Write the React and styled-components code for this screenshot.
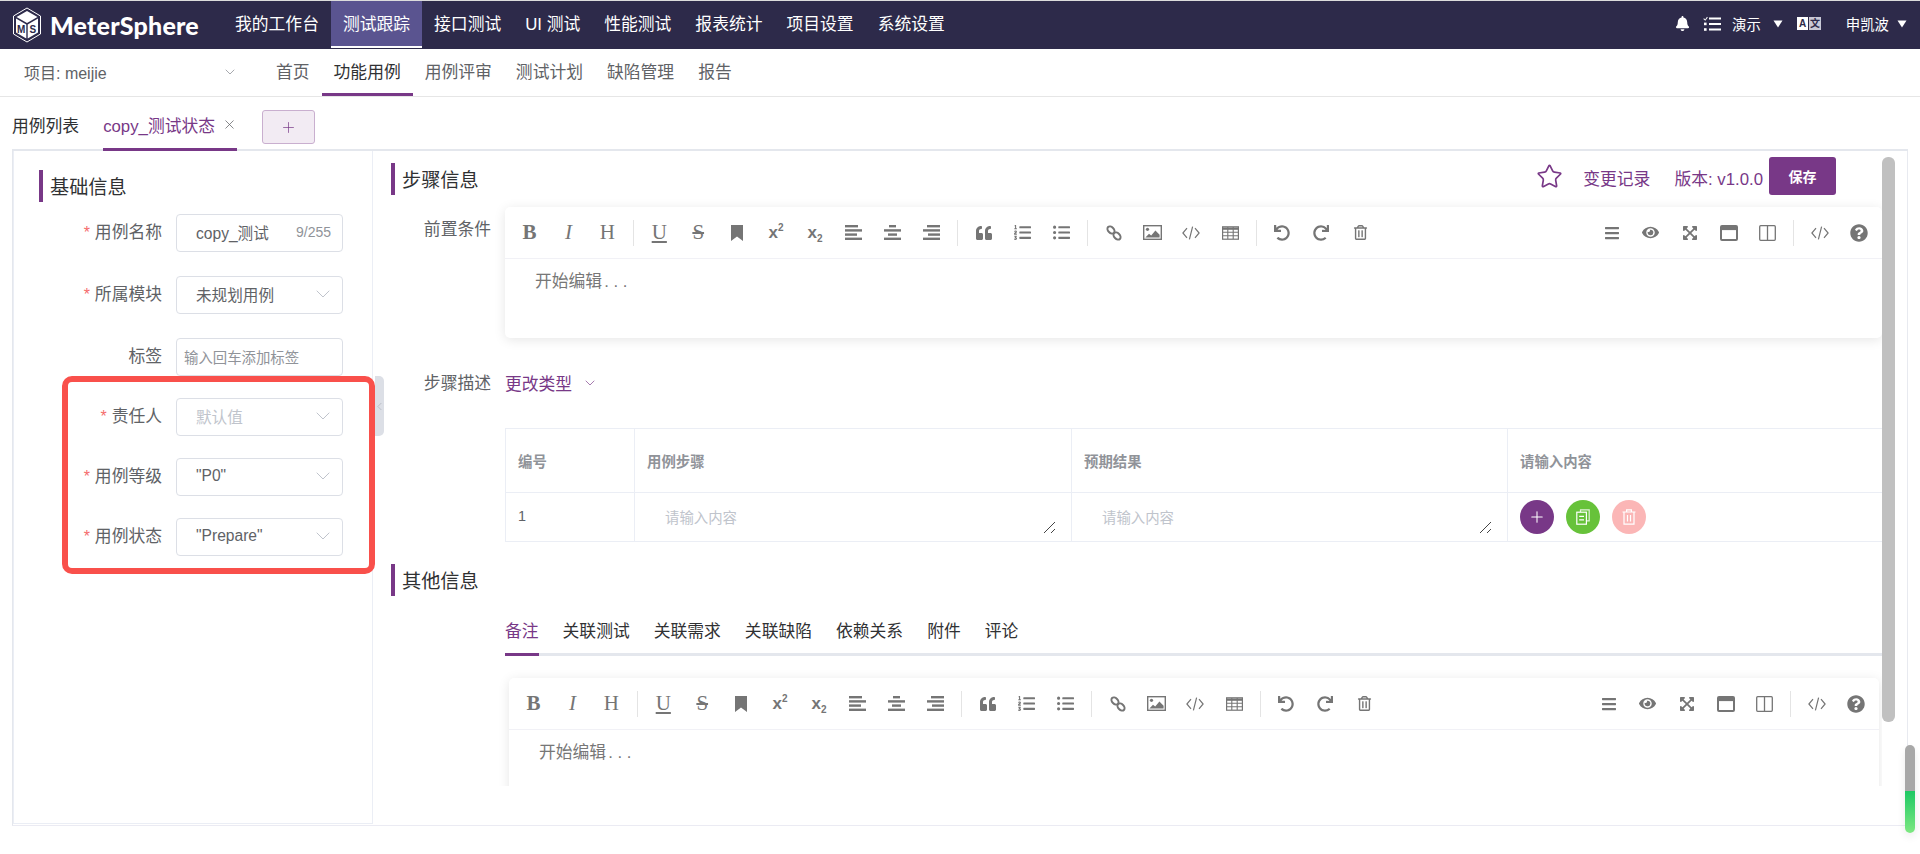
import React from "react";
import styled, { createGlobalStyle } from "styled-components";
import { ChevronDown, ChevronLeft, Plus, Star, X } from "lucide-react";
import {
  FaBars,
  FaBell,
  FaExpandArrowsAlt,
  FaEye,
  FaListOl,
  FaListUl,
  FaQuestionCircle,
  FaQuoteLeft,
  FaRedo,
  FaRegTrashAlt,
  FaUndo,
} from "react-icons/fa";

const PURPLE = "#783887";
const LINE = "#ebeef5";

const GlobalStyle = createGlobalStyle`
  html, body {
    margin: 0;
    padding: 0;
    background: #fff;
    font-family: "Liberation Sans", "Noto Sans CJK SC", sans-serif;
  }
  * {
    box-sizing: border-box;
  }
`;

const Page = styled.div`
  position: relative;
  width: 1920px;
  height: 854px;
  overflow: hidden;
  border-top: 1px solid #dcdcdc;
  background: #fff;
`;

/* top bar */
const TopBar = styled.header`
  display: flex;
  align-items: stretch;
  height: 48px;
  background: #2d2a4a;
  color: #fff;
`;

const Logo = styled.div`
  display: flex;
  align-items: center;
  gap: 8px;
  width: 223px;
  padding-left: 12px;
`;

const LogoText = styled.span`
  font-family: "Lato", sans-serif;
  font-weight: 900;
  font-size: 25px;
  letter-spacing: 0.2px;
  color: #fff;
`;

const NavItem = styled.div`
  display: flex;
  align-items: center;
  height: 47px;
  padding: 0 12px 2px;
  font-size: 16.8px;
  background: ${({ $active }) => ($active ? "#5a5490" : "transparent")};
  border-bottom: 2px solid ${({ $active }) => ($active ? "#fff" : "transparent")};
`;

const TopRight = styled.div`
  display: flex;
  align-items: center;
  margin-left: auto;
  width: 245px;
  padding-bottom: 3px;
`;

const TopItem = styled.span`
  display: inline-flex;
  align-items: center;
  margin-left: ${({ $ml }) => $ml || 0}px;
  font-size: 14.4px;
`;

const LangBox = styled.span`
  display: flex;
  gap: 1px;
  width: 24px;
`;

const LangCell = styled.span`
  flex: 1;
  height: 13px;
  line-height: 13px;
  text-align: center;
  font-size: 10px;
  font-weight: 700;
  background: ${({ $dark }) => ($dark ? "#c9c8d6" : "#fff")};
  color: #2d2a4a;
`;

/* second row */
const SubBar = styled.div`
  display: flex;
  height: 48px;
  border-bottom: 1px solid #e6e6e6;
`;

const ProjectSelect = styled.div`
  display: flex;
  align-items: center;
  justify-content: space-between;
  width: 240px;
  margin-left: 24px;
  padding-right: 26px;
  padding-bottom: 1px;
  font-size: 16px;
  color: #606266;
`;

const SubTab = styled.div`
  display: flex;
  align-items: center;
  height: 47px;
  padding: 0 12px;
  font-size: 16.8px;
  color: ${({ $active }) => ($active ? "#303133" : "#606266")};
  border-bottom: 3px solid ${({ $active }) => ($active ? PURPLE : "transparent")};
`;

/* page tabs */
const PageTabs = styled.div`
  display: flex;
  align-items: flex-start;
  height: 54px;
  margin: 0 12px;
  border-bottom: 2px solid #e4e7ed;
`;

const PageTab = styled.div`
  display: flex;
  align-items: center;
  gap: 7px;
  height: 54px;
  margin-right: ${({ $mr }) => $mr || 0}px;
  padding-top: 4px;
  font-size: 16.8px;
  color: ${({ $active }) => ($active ? PURPLE : "#303133")};
  border-bottom: 3px solid ${({ $active }) => ($active ? PURPLE : "transparent")};
`;

const AddTab = styled.div`
  display: flex;
  align-items: center;
  justify-content: center;
  width: 53px;
  height: 34px;
  margin: 13px 0 0 25px;
  border: 1px solid #c9afcf;
  border-radius: 3px;
  background: #f2ebf3;
  color: ${PURPLE};
`;

/* main */
const Shell = styled.div`
  display: flex;
  height: 675px;
  margin: 0 12px;
  border-left: 1px solid #e4e7ed;
  border-right: 1px solid #e8eaf0;
  border-bottom: 1px solid #ebebf3;
`;

const Aside = styled.aside`
  position: relative;
  flex: none;
  width: 360px;
  height: 673px;
  padding: 19px 0 0 25px;
  border-left: 1px solid ${LINE};
  border-right: 1px solid ${LINE};
  border-bottom: 1px solid ${LINE};
`;

const CollapseHandle = styled.div`
  position: absolute;
  left: calc(100% + 3px);
  top: 225px;
  display: flex;
  align-items: center;
  width: 9px;
  height: 60px;
  border-radius: 0 5px 5px 0;
  background: #dcdfe6;
  color: #a9adb6;
  svg {
    flex: none;
    margin-left: -2px;
  }
`;

const SectionTitle = styled.h3`
  display: flex;
  align-items: center;
  height: 32px;
  margin: 0;
  padding-left: 7px;
  border-left: 4px solid ${PURPLE};
  font-size: 19.2px;
  font-weight: 400;
  color: #303133;
`;

const FormGroup = styled.div`
  display: flex;
  flex-direction: column;
  gap: ${({ $gap }) => $gap}px;
  margin-top: ${({ $top }) => $top}px;
  margin-left: -25px;
`;

const FormRow = styled.div`
  display: flex;
  align-items: center;
  gap: 14px;
  height: 38px;
`;

const FormLabel = styled.label`
  flex: none;
  width: 148px;
  padding-bottom: 5px;
  text-align: right;
  font-size: 16.8px;
  color: #606266;
`;

const Required = styled.span`
  margin-right: 5px;
  color: #f56c6c;
  font-size: 16px;
`;

const Field = styled.div`
  display: flex;
  align-items: center;
  justify-content: space-between;
  width: 167px;
  height: 38px;
  padding: 0 ${({ $right }) => $right || 11}px 2px ${({ $pad }) => $pad || 19}px;
  border: 1px solid #dcdfe6;
  border-radius: 4px;
  font-size: ${({ $small }) => ($small ? "14.4px" : "15.6px")};
  color: ${({ $muted, $soft }) => ($muted ? "#c0c4cc" : $soft ? "#909399" : "#606266")};
`;

const Counter = styled.span`
  font-size: 14px;
  color: #909399;
`;

const Content = styled.main`
  flex: 1;
  min-width: 0;
  height: 635px;
  overflow: hidden;
  padding: 6px 0 0 18px;
`;

const Gutter = styled.div`
  flex: none;
  width: 25px;
  padding-top: 6px;
`;

const ScrollThumb = styled.div`
  width: 13px;
  height: 565px;
  border-radius: 6px;
  background: #c0c0c0;
`;

const HeadRow = styled.div`
  display: flex;
  align-items: flex-end;
  justify-content: space-between;
  height: 38px;
`;

const HeadActions = styled.div`
  display: flex;
  align-items: center;
  height: 38px;
  padding-right: 46px;
  color: ${PURPLE};
  font-size: 16.8px;
`;

const RecordLink = styled.span`
  margin-left: 20px;
  padding-top: 3px;
`;

const VersionText = styled.span`
  margin-left: 24px;
  padding-top: 3px;
`;

const SaveButton = styled.button`
  width: 67px;
  height: 38px;
  margin-left: 6px;
  padding-bottom: 2px;
  border: 0;
  border-radius: 3px;
  background: ${PURPLE};
  color: #fff;
  font: 700 14px "Liberation Sans", "Noto Sans CJK SC", sans-serif;
`;

const FieldRow = styled.div`
  display: grid;
  grid-template-columns: 100px 1fr;
  column-gap: 14px;
  margin-top: ${({ $top }) => $top}px;
`;

const RowLabel = styled.div`
  text-align: right;
  font-size: 16.8px;
  line-height: 24px;
  color: #606266;
  padding-top: ${({ $top }) => $top || 0}px;
`;

/* markdown editor */
const EditorBox = styled.div`
  height: ${({ $h }) => $h}px;
  margin: ${({ $inset }) => ($inset ? "22px 3px 0 118px" : "0")};
  border-radius: 5px;
  background: #fff;
  box-shadow: 0 2px 12px 0 rgba(0, 0, 0, 0.1);
`;

const Toolbar = styled.div`
  display: flex;
  justify-content: space-between;
  height: 52px;
  padding: 0 4px 0 5px;
  border-bottom: 1px solid #f1f1f6;
`;

const ToolGroup = styled.div`
  display: flex;
  align-items: center;
`;

const Tool = styled.span`
  display: flex;
  align-items: center;
  justify-content: center;
  flex: none;
  width: 38.95px;
  height: 51px;
  color: #757575;
  font-family: "Liberation Serif", serif;
  font-size: 21px;
  font-weight: ${({ $bold }) => ($bold ? 700 : 400)};
  font-style: ${({ $italic }) => ($italic ? "italic" : "normal")};
  text-decoration: ${({ $line }) => $line || "none"};
`;

const ScriptTool = styled(Tool)`
  font-family: "Liberation Sans", sans-serif;
  font-size: 17px;
  font-weight: 700;
  sup, sub {
    font-size: 10px;
    line-height: 0;
  }
`;

const ToolSep = styled.span`
  flex: none;
  width: 1px;
  height: 26px;
  margin: 0 6px;
  background: #e4e4e4;
`;

const EditorBody = styled.div`
  padding: 11px 0 0 30px;
  font-size: 16.8px;
  line-height: 24px;
  color: #777;
`;

const Dots = styled.span`
  margin-left: 2px;
  letter-spacing: 4.6px;
`;

const StepValue = styled.div`
  display: flex;
  align-items: center;
  gap: 10px;
  height: 24px;
  padding-bottom: 2px;
  color: ${PURPLE};
  font-size: 16.8px;
`;

/* steps table */
const StepTable = styled.table`
  width: 1377px;
  margin: 32px 0 0 114px;
  table-layout: fixed;
  border-collapse: collapse;
  border: 1px solid ${LINE};
  th, td {
    border: 1px solid ${LINE};
    padding: 0 0 0 12px;
    text-align: left;
  }
  th {
    height: 64px;
    font-size: 14.4px;
    font-weight: 700;
    color: #909399;
  }
  td {
    height: 49px;
    font-size: 14.4px;
    color: #606266;
  }
`;

const NumberCell = styled.td`
  && {
    padding-bottom: 2px;
  }
`;

const TextCell = styled.td`
  position: relative;
  && {
    padding-left: 30px;
    padding-bottom: 2px;
    color: #c0c4cc;
  }
`;

const ResizeMark = styled.svg`
  position: absolute;
  right: 15px;
  bottom: 7px;
`;

const RowButtons = styled.div`
  display: flex;
  gap: 12px;
`;

const RoundButton = styled.span`
  display: flex;
  align-items: center;
  justify-content: center;
  width: 34px;
  height: 34px;
  border-radius: 50%;
  background: ${({ $bg }) => $bg};
  color: #fff;
`;

const OtherTitle = styled(SectionTitle)`
  margin-top: 22px;
`;

const InfoTabs = styled.div`
  display: flex;
  height: 60px;
  margin-left: 114px;
  border-bottom: 3px solid #e4e7ed;
`;

const InfoTab = styled.div`
  display: flex;
  align-items: center;
  height: 60px;
  margin-right: 24px;
  padding-top: 11px;
  font-size: 16.8px;
  color: ${({ $active }) => ($active ? PURPLE : "#303133")};
  border-bottom: 3px solid ${({ $active }) => ($active ? PURPLE : "transparent")};
`;

/* things lying over the page */
const Annotation = styled.div`
  position: absolute;
  left: 62px;
  top: 375px;
  width: 313px;
  height: 198px;
  border: 6px solid #f9504b;
  border-radius: 10px;
  pointer-events: none;
`;

const FloatWidget = styled.div`
  position: absolute;
  left: 1905px;
  top: 744px;
  width: 10px;
  height: 88px;
  border-radius: 5px;
  background: linear-gradient(#a8a8a8 0, #a8a8a8 52%, #1ec864 52%, #7ee882 100%);
  box-shadow: 0 4px 8px rgba(0, 0, 0, 0.08);
`;

const BookmarkIcon = () => (
  <svg width="14" height="16" viewBox="0 0 14 16" fill="currentColor">
    <path d="M1 0h12v16l-6-4.4L1 16z" />
  </svg>
);

const AlignIcon = ({ bars }) => (
  <svg width="17" height="15" viewBox="0 0 17 15" fill="currentColor">
    {bars.map(([x, w], i) => (
      <rect key={i} x={x} y={i * 4.2} width={w} height="2.4" />
    ))}
  </svg>
);

const LinkIcon = () => (
  <svg width="16" height="16" viewBox="0 0 18 18" fill="none" stroke="currentColor" strokeWidth="2.3">
    <ellipse cx="5.6" cy="5.6" rx="4.6" ry="3.2" transform="rotate(45 5.6 5.6)" />
    <ellipse cx="12.4" cy="12.4" rx="4.6" ry="3.2" transform="rotate(45 12.4 12.4)" />
  </svg>
);

const ImageIcon = () => (
  <svg width="19" height="15" viewBox="0 0 19 15">
    <rect x="0.7" y="0.7" width="17.6" height="13.6" fill="none" stroke="currentColor" strokeWidth="1.4" />
    <circle cx="4.5" cy="4.3" r="1.6" fill="currentColor" />
    <path d="M2.4 12.6l3.6-3.8 2.2 1.8 4.2-5.2 4.2 4.4v2.8z" fill="currentColor" />
  </svg>
);

const CodeIcon = () => (
  <svg width="18" height="14" viewBox="0 0 18 14" fill="none" stroke="currentColor" strokeWidth="1.2">
    <path d="M5 2.2L0.9 7 5 11.8M13 2.2L17.1 7 13 11.8M10.6 0.6L7.4 13.4" />
  </svg>
);

const TableIcon = () => (
  <svg width="17" height="14" viewBox="0 0 17 14" fill="none" stroke="currentColor">
    <rect x="0.6" y="0.8" width="15.8" height="12.4" strokeWidth="1.2" />
    <path d="M0.6 2.6h15.8" strokeWidth="2.4" />
    <path d="M0.6 6.2h15.8M0.6 9.7h15.8M5.8 1v12M11.2 1v12" strokeWidth="1.1" />
  </svg>
);

const WindowIcon = () => (
  <svg width="18" height="16" viewBox="0 0 18 16" fill="none" stroke="currentColor">
    <rect x="1" y="1" width="16" height="14" rx="1" strokeWidth="2" />
    <path d="M1 3.4h16" strokeWidth="3.4" />
  </svg>
);

const SplitIcon = () => (
  <svg width="17" height="16" viewBox="0 0 17 16" fill="none" stroke="currentColor" strokeWidth="1.3">
    <rect x="0.7" y="0.7" width="15.6" height="14.6" rx="1" />
    <path d="M8.5 1v14" />
  </svg>
);

const Toolkit = () => (
  <Toolbar>
    <ToolGroup>
      <Tool $bold>B</Tool>
      <Tool $italic>I</Tool>
      <Tool>H</Tool>
      <ToolSep />
      <Tool $line="underline">U</Tool>
      <Tool $line="line-through">S</Tool>
      <Tool>
        <BookmarkIcon />
      </Tool>
      <ScriptTool>
        <span>
          x<sup>2</sup>
        </span>
      </ScriptTool>
      <ScriptTool>
        <span>
          x<sub>2</sub>
        </span>
      </ScriptTool>
      <Tool>
        <AlignIcon bars={[[0, 13], [0, 17], [0, 12], [0, 17]]} />
      </Tool>
      <Tool>
        <AlignIcon bars={[[5, 7], [0, 17], [4, 9], [0, 17]]} />
      </Tool>
      <Tool>
        <AlignIcon bars={[[4, 13], [0, 17], [5, 12], [0, 17]]} />
      </Tool>
      <ToolSep />
      <Tool>
        <FaQuoteLeft size={16} />
      </Tool>
      <Tool>
        <FaListOl size={17} />
      </Tool>
      <Tool>
        <FaListUl size={17} />
      </Tool>
      <ToolSep />
      <Tool>
        <LinkIcon />
      </Tool>
      <Tool>
        <ImageIcon />
      </Tool>
      <Tool>
        <CodeIcon />
      </Tool>
      <Tool>
        <TableIcon />
      </Tool>
      <ToolSep />
      <Tool>
        <FaUndo size={16} />
      </Tool>
      <Tool>
        <FaRedo size={16} />
      </Tool>
      <Tool>
        <FaRegTrashAlt size={15} />
      </Tool>
    </ToolGroup>
    <ToolGroup>
      <Tool>
        <FaBars size={16} />
      </Tool>
      <Tool>
        <FaEye size={17} />
      </Tool>
      <Tool>
        <FaExpandArrowsAlt size={16} />
      </Tool>
      <Tool>
        <WindowIcon />
      </Tool>
      <Tool>
        <SplitIcon />
      </Tool>
      <ToolSep />
      <Tool>
        <CodeIcon />
      </Tool>
      <Tool>
        <FaQuestionCircle size={18} />
      </Tool>
    </ToolGroup>
  </Toolbar>
);

const Editor = ({ h, inset }) => (
  <EditorBox $h={h} $inset={inset}>
    <Toolkit />
    <EditorBody>
      开始编辑<Dots>...</Dots>
    </EditorBody>
  </EditorBox>
);

const LogoMark = () => (
  <svg width="30" height="36" viewBox="0 0 30 36">
    <path d="M15 1l13.5 8v18L15 35 1.5 27V9z" fill="none" stroke="#fff" strokeWidth="1" />
    <path d="M15 4l10.5 6L15 16 4.5 10z" fill="#fff" />
    <path d="M4 11.5l10.3 6v14L4 25.5z" fill="#fff" />
    <path d="M26 11.5l-10.3 6v14L26 25.5z" fill="#fff" />
    <text x="5" y="26" fontSize="10" fontWeight="700" fill="#2d2a4a" fontFamily="Liberation Sans">M</text>
    <text x="17.5" y="26" fontSize="10" fontWeight="700" fill="#2d2a4a" fontFamily="Liberation Sans">S</text>
  </svg>
);

const ChecklistIcon = () => (
  <svg width="18" height="16" viewBox="0 0 18 16" fill="#fff">
    <path d="M6 1.5h12v2H6zM6 7h12v2H6zM6 12.5h12v2H6zM1 2.2l1.2 1.2L4 .8l.8.6-2.5 3.4L.3 3z" />
    <rect x="1" y="6.6" width="2.6" height="2.6" />
    <rect x="1" y="12.2" width="2.6" height="2.6" />
  </svg>
);

const Caret = () => (
  <svg width="10" height="8" viewBox="0 0 10 8" fill="#fff">
    <path d="M0.5 0.5h9L5 7.5z" />
  </svg>
);

const CopyIcon = () => (
  <svg width="14" height="16" viewBox="0 0 14 16" fill="none" stroke="#fff" strokeWidth="1.2">
    <path d="M4.5 3V.8h8.7v11H10.8" opacity="0.8" />
    <rect x="0.8" y="3.2" width="9.6" height="12" />
    <path d="M3.2 7.4h4.8M3.2 10.8h4.8" />
  </svg>
);

const DeleteIcon = () => (
  <svg width="14" height="16" viewBox="0 0 14 16" fill="none" stroke="#fff" strokeWidth="1.2">
    <path d="M0.5 3h13M4.6 3V.8h4.8V3M2 3v12.2h10V3M5.5 6v6.4M8.5 6v6.4" />
  </svg>
);

const navItems = ["我的工作台", "测试跟踪", "接口测试", "UI 测试", "性能测试", "报表统计", "项目设置", "系统设置"];
const subTabs = ["首页", "功能用例", "用例评审", "测试计划", "缺陷管理", "报告"];
const infoTabs = ["备注", "关联测试", "关联需求", "关联缺陷", "依赖关系", "附件", "评论"];

const SelectField = ({ children, muted }) => (
  <Field $muted={muted} $right={7}>
    <span>{children}</span>
    <ChevronDown size={24} color="#c0c4cc" strokeWidth={1} />
  </Field>
);

export default function App() {
  return (
    <Page>
      <GlobalStyle />
      <TopBar>
        <Logo>
          <LogoMark />
          <LogoText>MeterSphere</LogoText>
        </Logo>
        {navItems.map((item) => (
          <NavItem key={item} $active={item === "测试跟踪"}>
            {item}
          </NavItem>
        ))}
        <TopRight>
          <TopItem>
            <FaBell size={15} />
          </TopItem>
          <TopItem $ml={13}>
            <ChecklistIcon />
          </TopItem>
          <TopItem $ml={11}>演示</TopItem>
          <TopItem $ml={12}>
            <Caret />
          </TopItem>
          <TopItem $ml={14}>
            <LangBox>
              <LangCell>A</LangCell>
              <LangCell $dark>文</LangCell>
            </LangBox>
          </TopItem>
          <TopItem $ml={25}>申凯波</TopItem>
          <TopItem $ml={8}>
            <Caret />
          </TopItem>
        </TopRight>
      </TopBar>

      <SubBar>
        <ProjectSelect>
          项目: meijie
          <ChevronDown size={16} color="#909399" strokeWidth={1.2} />
        </ProjectSelect>
        {subTabs.map((tab) => (
          <SubTab key={tab} $active={tab === "功能用例"}>
            {tab}
          </SubTab>
        ))}
      </SubBar>

      <PageTabs>
        <PageTab $mr={24}>用例列表</PageTab>
        <PageTab $active>
          copy_测试状态
          <X size={15} color="#606266" strokeWidth={1.2} />
        </PageTab>
        <AddTab>
          <Plus size={17} strokeWidth={1} />
        </AddTab>
      </PageTabs>

      <Shell>
        <Aside>
          <SectionTitle>基础信息</SectionTitle>
          <FormGroup $gap={24} $top={12}>
            <FormRow>
              <FormLabel>
                <Required>*</Required>用例名称
              </FormLabel>
              <Field>
                copy_测试
                <Counter>9/255</Counter>
              </Field>
            </FormRow>
            <FormRow>
              <FormLabel>
                <Required>*</Required>所属模块
              </FormLabel>
              <SelectField>未规划用例</SelectField>
            </FormRow>
            <FormRow>
              <FormLabel>标签</FormLabel>
              <Field $pad={7} $small $soft>
                输入回车添加标签
              </Field>
            </FormRow>
          </FormGroup>
          <FormGroup $gap={22} $top={22}>
            <FormRow>
              <FormLabel>
                <Required>*</Required>责任人
              </FormLabel>
              <SelectField muted>默认值</SelectField>
            </FormRow>
            <FormRow>
              <FormLabel>
                <Required>*</Required>用例等级
              </FormLabel>
              <SelectField>"P0"</SelectField>
            </FormRow>
            <FormRow>
              <FormLabel>
                <Required>*</Required>用例状态
              </FormLabel>
              <SelectField>"Prepare"</SelectField>
            </FormRow>
          </FormGroup>
          <CollapseHandle>
            <ChevronLeft size={13} strokeWidth={1.2} />
          </CollapseHandle>
        </Aside>

        <Content>
          <HeadRow>
            <SectionTitle>步骤信息</SectionTitle>
            <HeadActions>
              <Star size={27} strokeWidth={1.5} />
              <RecordLink>变更记录</RecordLink>
              <VersionText>版本: v1.0.0</VersionText>
              <SaveButton>保存</SaveButton>
            </HeadActions>
          </HeadRow>

          <FieldRow $top={12}>
            <RowLabel $top={11}>前置条件</RowLabel>
            <Editor h={131} />
          </FieldRow>

          <FieldRow $top={34}>
            <RowLabel>步骤描述</RowLabel>
            <StepValue>
              更改类型
              <ChevronDown size={16} strokeWidth={1} />
            </StepValue>
          </FieldRow>

          <StepTable>
            <colgroup>
              <col width="129" />
              <col width="437" />
              <col width="436" />
              <col width="375" />
            </colgroup>
            <thead>
              <tr>
                <th>编号</th>
                <th>用例步骤</th>
                <th>预期结果</th>
                <th>请输入内容</th>
              </tr>
            </thead>
            <tbody>
              <tr>
                <NumberCell>1</NumberCell>
                <TextCell>
                  请输入内容
                  <ResizeMark width="13" height="13" viewBox="0 0 13 13" stroke="#444" strokeWidth="1">
                    <path d="M1 12L12 1M8 12l4-4" />
                  </ResizeMark>
                </TextCell>
                <TextCell>
                  请输入内容
                  <ResizeMark width="13" height="13" viewBox="0 0 13 13" stroke="#444" strokeWidth="1">
                    <path d="M1 12L12 1M8 12l4-4" />
                  </ResizeMark>
                </TextCell>
                <td>
                  <RowButtons>
                    <RoundButton $bg={PURPLE}>
                      <Plus size={18} strokeWidth={1.4} />
                    </RoundButton>
                    <RoundButton $bg="#67c23a">
                      <CopyIcon />
                    </RoundButton>
                    <RoundButton $bg="#fbb6b6">
                      <DeleteIcon />
                    </RoundButton>
                  </RowButtons>
                </td>
              </tr>
            </tbody>
          </StepTable>

          <OtherTitle>其他信息</OtherTitle>
          <InfoTabs>
            {infoTabs.map((tab) => (
              <InfoTab key={tab} $active={tab === "备注"}>
                {tab}
              </InfoTab>
            ))}
          </InfoTabs>
          <Editor h={131} inset />
        </Content>

        <Gutter>
          <ScrollThumb />
        </Gutter>
      </Shell>

      <Annotation />
      <FloatWidget />
    </Page>
  );
}
